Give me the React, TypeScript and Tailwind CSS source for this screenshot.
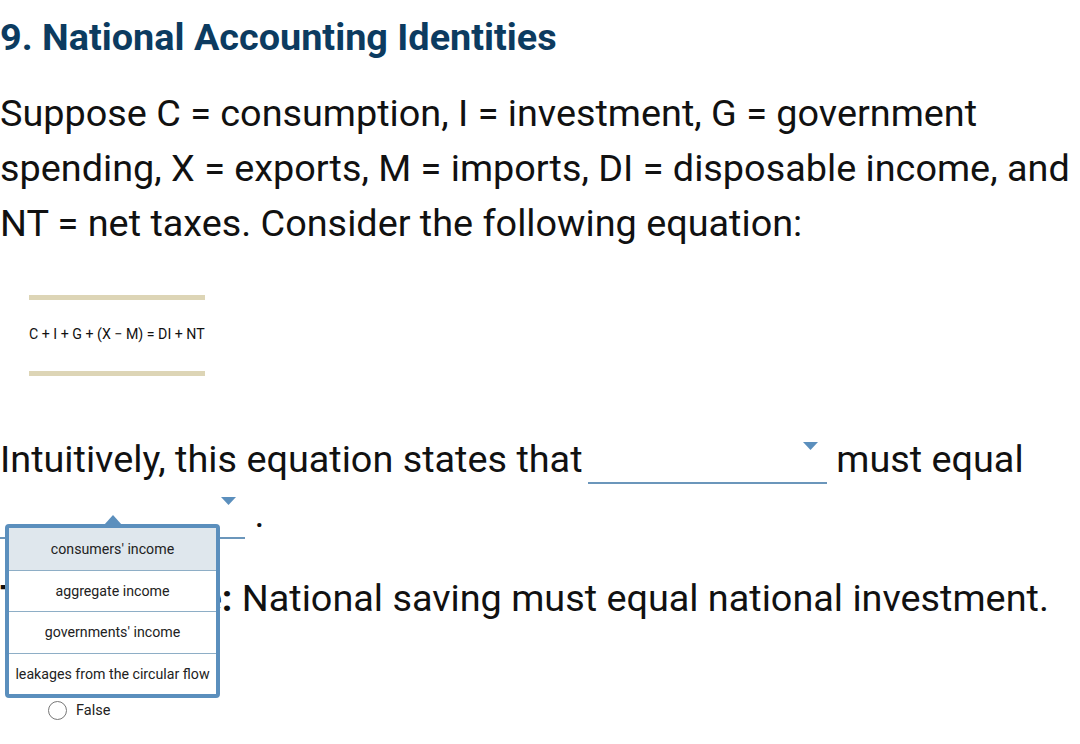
import { useState } from "react";

const OPTIONS = [
	"consumers' income",
	"aggregate income",
	"governments' income",
	"leakages from the circular flow",
];

function Caret() {
	return (
		<svg
			className="absolute right-[9px] top-[2px]"
			width="15"
			height="8"
			viewBox="0 0 15 8"
		>
			<path d="M0 0 H15 L7.5 8 Z" fill="#5b8fbd" />
		</svg>
	);
}

function Blank({ width, open }: { width: string; open?: boolean }) {
	return (
		<span
			className={`relative inline-block h-[44px] align-[-12px] border-b-2 border-[#6b96bb] ${width}`}
		>
			<Caret />
			{open && <Menu />}
		</span>
	);
}

function Menu() {
	const [active] = useState(0);
	return (
		<div className="absolute left-[5px] top-[29px] z-10 w-[215px]">
			{/* pointer above the list */}
			<svg
				className="absolute left-[99px] -top-[9px]"
				width="18"
				height="10"
				viewBox="0 0 18 10"
			>
				<path d="M0 10 L9 0 L18 10 Z" fill="#5b8fbd" />
			</svg>
			<ul className="rounded-[4px] border-4 border-[#5b8fbd] bg-white text-[14.2px] leading-none text-[#222]">
				{OPTIONS.map((opt, i) => (
					<li
						key={opt}
						className={`flex h-[41.5px] items-center justify-center border-[#8eaec6] ${
							i > 0 ? "border-t" : ""
						} ${i === active ? "bg-[#dfe7ed]" : ""}`}
					>
						{opt}
					</li>
				))}
			</ul>
		</div>
	);
}

function Radio({ label }: { label: string }) {
	return (
		<label className="flex h-[41px] items-center gap-[9px] text-[14.5px] text-[#222]">
			<span className="h-[19px] w-[19px] rounded-full border border-[#777]" />
			{label}
		</label>
	);
}

export default function App() {
	return (
		<div className="min-h-screen bg-white font-['Roboto',sans-serif] text-[#111]">
			<h1 className="pt-[17px] text-[37.8px] font-bold leading-[40px] text-[#0c3b60]">
				9. National Accounting Identities
			</h1>

			<p className="mt-[29px] text-[37.8px] leading-[55px]">
				Suppose C = consumption, I = investment, G = government spending, X =
				exports, M = imports, DI = disposable income, and NT = net taxes.
				Consider the following equation:
			</p>

			{/* equation block */}
			<div className="mt-[44px] ml-[29px] w-fit whitespace-nowrap border-y-[5px] border-[#ddd5b6] pt-[25px] pb-[28px] text-[14.2px] leading-[18px]">
				C + I + G + (X − M) = DI + NT
			</div>

			<p className="mt-[56px] text-[37.8px] leading-[55px]">
				Intuitively, this equation states that{" "}
				<span className="-ml-[4px]">
					<Blank width="w-[239px]" />
				</span>{" "}
				must equal <Blank width="w-[245px]" open /> .
			</p>

			<p className="mt-[29px] text-[37.8px] leading-[55px]">
				<span className="font-bold">True or False:</span> National saving
				must equal national investment.
			</p>

			<div className="mt-[23px] ml-[48px]">
				<Radio label="True" />
				<Radio label="False" />
			</div>
		</div>
	);
}
